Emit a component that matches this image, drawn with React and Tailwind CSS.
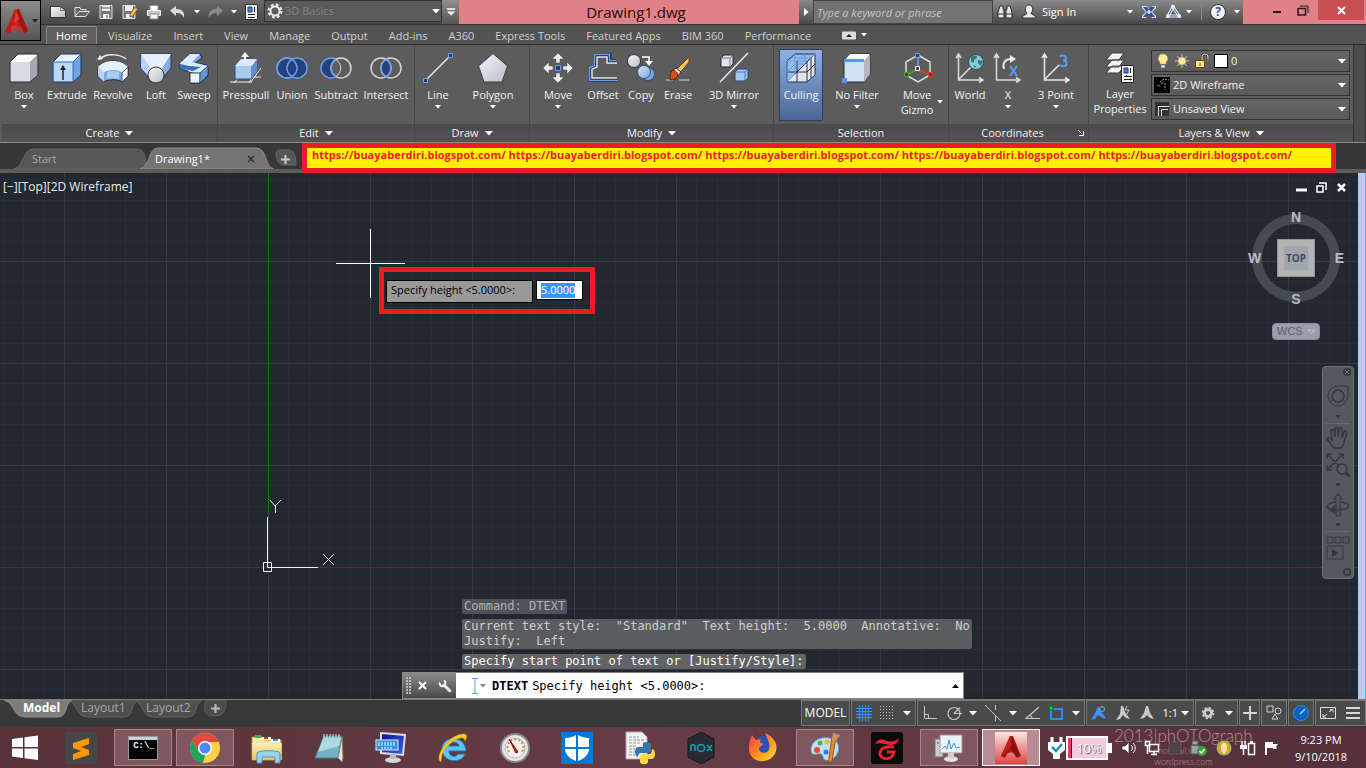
import { useState } from "react";

const Svg = ({ w, h = w, className = "", children }) => (
  <svg
    width={w}
    height={h}
    viewBox={`0 0 ${w} ${h}`}
    fill="none"
    aria-hidden="true"
    className={`shrink-0 ${className}`}
  >
    {children}
  </svg>
);

const Caret = ({ className = "text-white" }) => (
  <Svg w={6} h={4} className={className}>
    <path d="M0 0h6L3 3.5z" fill="currentColor" />
  </Svg>
);

const BigCaret = ({ className = "text-white" }) => (
  <Svg w={8} h={5} className={className}>
    <path d="M0 0h8L4 4.5z" fill="currentColor" />
  </Svg>
);

// Degradados compartidos por los iconos
const Gradients = () => (
  <svg width="0" height="0" className="absolute" aria-hidden="true">
    <defs>
      <linearGradient id="gWhite" x1="0" y1="0" x2="1" y2="1">
        <stop offset="0" stopColor="#f6f7fa" />
        <stop offset="1" stopColor="#b9bcc8" />
      </linearGradient>
      <linearGradient id="gBlue" x1="0" y1="0" x2="1" y2="1">
        <stop offset="0" stopColor="#d6e8fb" />
        <stop offset="1" stopColor="#7ea8dd" />
      </linearGradient>
      <linearGradient id="gRed" x1="0" y1="0" x2="1" y2="1">
        <stop offset="0" stopColor="#f0413c" />
        <stop offset="1" stopColor="#8c1010" />
      </linearGradient>
      <linearGradient id="gAcad" x1="0" y1="0" x2="0" y2="1">
        <stop offset="0" stopColor="#fbe6e4" />
        <stop offset="1" stopColor="#e04444" />
      </linearGradient>
      <linearGradient id="gFolder" x1="0" y1="0" x2="0" y2="1">
        <stop offset="0" stopColor="#fdf3c0" />
        <stop offset="1" stopColor="#e5c35c" />
      </linearGradient>
      <linearGradient id="gFox" x1="0" y1="0" x2="1" y2="1">
        <stop offset="0" stopColor="#ff3b52" />
        <stop offset="0.5" stopColor="#ff8a1c" />
        <stop offset="1" stopColor="#ffe23a" />
      </linearGradient>
      <linearGradient id="gScreen" x1="0" y1="0" x2="1" y2="1">
        <stop offset="0" stopColor="#0a1590" />
        <stop offset="1" stopColor="#3e62ea" />
      </linearGradient>
    </defs>
  </svg>
);

/* ---------- Iconos de la cinta ---------- */

const Cube = ({ blue }) => (
  <>
    <path d="M2 10 10 2h20v21l-8 7H2z" fill={blue ? "#b9d8f6" : "#d9dbe2"} />
    <path d="M2 10 10 2h20l-8 8z" fill={blue ? "#e8f3fd" : "#fafafc"} />
    <path d="M22 10l8-8v21l-8 7z" fill={blue ? "#6fa2e0" : "#a5a8b4"} />
    <path d="M2 10 10 2h20v21l-8 7H2z" stroke={blue ? "#16365f" : "#2c2c30"} />
  </>
);

const icons = {
  box: (
    <Svg w={32}>
      <Cube />
    </Svg>
  ),
  extrude: (
    <Svg w={32}>
      <Cube blue />
      <path d="M2 10h20v20M22 10l8-8M2 10v20" stroke="#2f6cc0" />
      <path d="M12 28V16" stroke="#222" strokeWidth="1.500" />
      <path d="M9 18l3-5 3 5z" fill="#222" />
    </Svg>
  ),
  revolve: (
    <Svg w={32}>
      <path d="M3 7c6-6 20-5 26 0" stroke="#eee" strokeWidth="1.500" />
      <path d="M0 8l3-5 3 4z" fill="#eee" />
      <path d="M1 15c7-8 23-8 30 0v9l-6 6c-2-3-16-3-18 0l-6-6z" fill="#7fa9dd" stroke="#1a3352" />
      <path d="M1 15c7-8 23-8 30 0l-6 6c-2-4-16-4-18 0z" fill="#e3effb" />
      <path d="M7 21l-6-6v9l6 6z" fill="#b8d2f1" />
      <path d="M25 21l6-6v9l-6 6z" fill="#f4f6fa" stroke="#222" strokeWidth="0.7" />
      <path d="M10 20c4-2 8-2 12 0v7c-4-1-8-1-12 0z" fill="#a9cbf2" />
    </Svg>
  ),
  loft: (
    <Svg w={32}>
      <path d="M1 2h30v14l-8 10H9L1 16z" fill="#86ace0" stroke="#1c3a66" />
      <path d="M1 2h30L21 18H11z" fill="#e4f0fc" />
      <path d="M1 2l10 15-2 8-8-9z" fill="#b8d5f4" />
      <circle cx="16" cy="23" r="8" fill="url(#gWhite)" stroke="#333" />
    </Svg>
  ),
  sweep: (
    <Svg w={32}>
      <path d="M2 11 12 2h10l2 4-7 5 11 2 2 3v8l-8 7h-9V20L2 17z" fill="#7ba6dd" stroke="#14335e" />
      <path d="M2 11 12 2h10l-8 8 16 4-8 7-10-1L2 13z" fill="#dcebfb" />
      <path d="M2 12l9 2 12 1-8 4-13-3z" fill="#346fb8" />
      <path d="M12 21h10v10H12z" fill="#f2f3f6" stroke="#222" strokeWidth="0.8" />
      <path d="M22 21l8-7v9l-8 8z" fill="#6897d4" stroke="#14335e" strokeWidth="0.7" />
    </Svg>
  ),
  presspull: (
    <Svg w={32}>
      <path d="M0 30h22M4 31l6-7M21 30 31 16M24 25h7M19 31l3-6" stroke="#eee" />
      <path d="M5 14l6-7h16l-5 7v13H5z" fill="#a9caf0" stroke="#2d5285" />
      <path d="M22 14l5-7v12l-5 8z" fill="#5c8dce" />
      <path d="M5 14l6-7h16l-5 7z" fill="#dbeafb" />
      <path d="M15 10V3" stroke="#fff" strokeWidth="2" />
      <path d="M11 5l4-5 4 5z" fill="#fff" />
    </Svg>
  ),
  union: (
    <Svg w={32}>
      <circle cx="11" cy="16" r="10" fill="#25407a" stroke="#6a9fec" strokeWidth="1.5" />
      <circle cx="21" cy="16" r="10" fill="#25407a" stroke="#6a9fec" strokeWidth="1.5" />
      <circle cx="11" cy="16" r="10" stroke="#6a9fec" strokeWidth="1.5" />
    </Svg>
  ),
  subtract: (
    <Svg w={32}>
      <circle cx="11" cy="16" r="10" fill="#25407a" stroke="#6a9fec" strokeWidth="1.5" />
      <circle cx="21" cy="16" r="10" fill="#5c5c5c" stroke="#d5d5d5" strokeWidth="1.5" />
      <path d="M16 7.500a10 10 0 0 0 0 17" stroke="#6a9fec" strokeWidth="1.5" />
      <path d="M16 7.500a10 10 0 0 1 0 17" stroke="#d5d5d5" />
    </Svg>
  ),
  intersect: (
    <Svg w={32}>
      <circle cx="11" cy="16" r="10" stroke="#d5d5d5" strokeWidth="1.5" />
      <circle cx="21" cy="16" r="10" stroke="#d5d5d5" strokeWidth="1.5" />
      <path d="M16 7.500a10 10 0 0 1 0 17a10 10 0 0 1 0-17z" fill="#25407a" stroke="#6a9fec" strokeWidth="1.5" />
    </Svg>
  ),
  line: (
    <Svg w={32}>
      <path d="M4 28 28 4" stroke="#e8e8e8" strokeWidth="1.5" />
      <path d="M1.500 26.500h4v4h-4zM26.500 1.500h4v4h-4z" fill="#1d3d6e" stroke="#6ba4f5" />
    </Svg>
  ),
  polygon: (
    <Svg w={32}>
      <path d="M16 1.500 30.500 14 25 30H7L1.500 14z" fill="url(#gWhite)" stroke="#3b3b3f" />
    </Svg>
  ),
  move: (
    <Svg w={32}>
      <path
        d="M16 1l6 6h-4v4h-4V7h-4zM16 31l6-6h-4v-4h-4v4h-4zM1 16l6-6v4h4v4H7v4zM31 16l-6-6v4h-4v4h4v4z"
        fill="#ececee"
        stroke="#444"
        strokeWidth="0.5"
      />
      <path d="M13.500 13.500h5v5h-5z" fill="#1d3d6e" stroke="#6ba4f5" />
    </Svg>
  ),
  offset: (
    <Svg w={32}>
      <path d="M30 28H3.500V16l5-2V3.500h14V9h7" stroke="#16233a" strokeWidth="4" />
      <path d="M30 28.500H2.500V15.500l5-2V2.500h15v6h7" stroke="#6fa2ee" strokeWidth="1.500" />
      <path d="M30 26H5V17l5-2V5h10v6h10" stroke="#e8e8e8" strokeWidth="1.500" />
    </Svg>
  ),
  copy: (
    <Svg w={32}>
      <circle cx="9" cy="9" r="6.500" fill="url(#gWhite)" stroke="#333" />
      <path d="M17 5h7v6" stroke="#fff" strokeWidth="1.500" />
      <path d="M20 9h8l-4 5z" fill="#fff" />
      <circle cx="23" cy="22" r="6.500" fill="#7ea8dd" stroke="#2c4d80" />
      <circle cx="19" cy="20" r="6.500" fill="url(#gBlue)" stroke="#2c4d80" />
    </Svg>
  ),
  erase: (
    <Svg w={32}>
      <path d="M4 28h7M17 28h10" stroke="#9a9a9a" strokeWidth="2" />
      <path d="M13 19 27 5v5L17 22z" fill="#f6c562" stroke="#6b4310" />
      <path d="M11 18l3-2 5 4-3 4z" fill="#e8e8ee" stroke="#333" />
      <path d="M11 18c2 0 5 3 5 6-2 3-5 4-8 4 0-4 0-8 3-10z" fill="#d34f16" stroke="#5a1e06" />
    </Svg>
  ),
  mirror: (
    <Svg w={32}>
      <path d="M2 30 30 1" stroke="#e8e8e8" strokeWidth="1.500" />
      <path d="M3 6l3-3h9v9l-3 3H3z" fill="#e3e4ea" stroke="#26262a" />
      <path d="M3 6h9v9M12 6l3-3" stroke="#77777d" />
      <path d="M17 20l3-3h10v9l-3 3H17z" fill="#a6c8f1" stroke="#26436f" />
      <path d="M17 20h10v9M27 20l3-3" stroke="#4679bf" />
    </Svg>
  ),
  culling: (
    <Svg w={32}>
      <path d="M2 9 10 2h20v21l-8 7H2z" fill="#9dbbe4" />
      <path d="M2 30 22 10v20zM22 10l8-8v21l-8 7z" fill="#e3e4ea" />
      <path d="M2 9 10 2h20v21l-8 7H2zM12 9v21M2 20h20M22 9v21M22 20l8-8M26 6v20M2 30 30 2" stroke="#20304f" />
      <path d="M2 9h20l8-7M2 9v21M10 2v20M12 9l8-7M6 6h20M20 2v8M2 20l8-8h10M10 22l-8 8" stroke="#5f9dfa" />
    </Svg>
  ),
  filter: (
    <Svg w={32}>
      <path d="M3 9 9 2h20v20l-6 8H3z" fill="#cfe2f6" stroke="#2c2c30" />
      <path d="M3 9 9 2h20l-6 7z" fill="#f7f8fa" />
      <path d="M23 9l6-7v20l-6 8z" fill="#b4b6c0" />
      <path d="M3 7h20v3H3zM1 26h5v5H1z" fill="#5795f6" />
    </Svg>
  ),
  gizmo: (
    <Svg w={32}>
      <path d="M16 3l12 7v13l-12 7L4 23V10z" stroke="#dedede" strokeWidth="1.500" />
      <path d="M16 16V5" stroke="#68a0f8" strokeWidth="1.500" />
      <path d="M16 17 6 22" stroke="#4ca81c" strokeWidth="1.500" />
      <path d="M16 17l10 5" stroke="#d94320" strokeWidth="1.500" />
      <path d="M13.500 1.500h4v4h-4z" fill="#444" stroke="#68a0f8" />
      <path d="M2.500 20.500h4v4h-4z" fill="#444" stroke="#4ca81c" />
      <path d="M26.500 20.500h4v4h-4z" fill="#444" stroke="#d94320" />
      <path d="M13.500 14.500h4v4h-4z" fill="#444" stroke="#fff" />
    </Svg>
  ),
  world: (
    <Svg w={32}>
      <path d="M4.500 3v25H28M2 6l2.500-4L7 6M25 25.500l4 2.500-4 2.500M5 27l12-12" stroke="#dcdcdc" strokeWidth="1.500" />
      <circle cx="22" cy="10" r="7.500" fill="#8cc6e4" stroke="#274d63" />
      <path d="M17 6c2-3 6-3 6-1s-3 2-3 4-2 2-3 0zM24 8l5 1-2 5-3-3zM19 13l3 1-1 2z" fill="#2e7f5c" />
    </Svg>
  ),
  ucsX: (
    <Svg w={32}>
      <path d="M4.500 3v25H27M2 6l2.500-4L7 6M24 25.500l4 2.500-4 2.500" stroke="#dcdcdc" strokeWidth="1.500" />
      <path d="M12 17c-2-7 2-10 7-10" stroke="#e8e8e8" strokeWidth="2" />
      <path d="M18 3l6 4-6 4z" fill="#e8e8e8" />
      <path d="M18 14l7 10M25 14l-7 10" stroke="#5b9bff" strokeWidth="2" />
    </Svg>
  ),
  point3: (
    <Svg w={32}>
      <path d="M4.500 3v25H28M2 6l2.500-4L7 6M25 25.500l4 2.500-4 2.500M5 27l14-14" stroke="#e8e8e8" strokeWidth="1.500" />
      <path d="M20 5c1-2 6-2 6 1 0 2-2 2.500-3 2.500 2 0 3.500 1 3.500 3 0 3-5 3.500-7 1" stroke="#5b9bff" strokeWidth="2" />
    </Svg>
  ),
  layers: (
    <Svg w={32}>
      <path d="M8 15h12l-5 7H2zM8 9h12l-5 7H2zM8 2h12l-5 7H2z" fill="#f4f4f6" stroke="#3c3c40" />
      <path d="M17.500 14.500h12v17h-12z" fill="#f4f4f6" stroke="#222" />
      <path d="M20 17h4v5h-4z" fill="#4c84d8" stroke="#1d3d6e" />
      <path d="M26.500 17v5M20 25.500h8M20 28.500h8M22.500 24v2M26.500 27.500v2" stroke="#222" />
    </Svg>
  ),
};

/* ---------- Cinta ---------- */

const panels = [
  {
    title: "Create",
    size: "w-[216px]",
    pad: "pl-[2px]",
    caret: true,
    tools: [
      { label: "Box", icon: "box", w: "w-10", caret: true },
      { label: "Extrude", icon: "extrude", w: "w-[46px]" },
      { label: "Revolve", icon: "revolve", w: "w-[46px]" },
      { label: "Loft", icon: "loft", w: "w-10" },
      { label: "Sweep", icon: "sweep", w: "w-9" },
    ],
  },
  {
    title: "Edit",
    size: "w-[197px]",
    pad: "pl-[3px]",
    caret: true,
    tools: [
      { label: "Presspull", icon: "presspull", w: "w-[50px]" },
      { label: "Union", icon: "union", w: "w-[42px]" },
      { label: "Subtract", icon: "subtract", w: "w-[46px]" },
      { label: "Intersect", icon: "intersect", w: "w-[54px]" },
    ],
  },
  {
    title: "Draw",
    size: "w-[115px]",
    pad: "pl-px",
    caret: true,
    tools: [
      { label: "Line", icon: "line", w: "w-11", caret: true },
      { label: "Polygon", icon: "polygon", w: "w-[66px]", caret: true },
    ],
  },
  {
    title: "Modify",
    size: "w-[244px]",
    pad: "pl-[6px]",
    caret: true,
    tools: [
      { label: "Move", icon: "move", w: "w-11", caret: true },
      { label: "Offset", icon: "offset", w: "w-[46px]" },
      { label: "Copy", icon: "copy", w: "w-[30px]" },
      { label: "Erase", icon: "erase", w: "w-11" },
      { label: "3D Mirror", icon: "mirror", w: "w-[68px]", caret: true },
    ],
  },
  {
    title: "Selection",
    size: "w-[175px]",
    pad: "pl-[5px]",
    tools: [
      { label: "Culling", icon: "culling", w: "w-11", active: true },
      { label: "No Filter", icon: "filter", w: "w-[68px]", caret: true },
      { label: "Move Gizmo", icon: "gizmo", w: "w-[54px]", side: true },
    ],
  },
  {
    title: "Coordinates",
    size: "w-[140px]",
    pad: "",
    launcher: true,
    tools: [
      { label: "World", icon: "world", w: "w-[42px]" },
      { label: "X", icon: "ucsX", w: "w-[34px]", caret: true },
      { label: "3 Point", icon: "point3", w: "w-[62px]", caret: true },
    ],
  },
];

const Tool = ({ tool }) => (
  <button
    className={`flex h-[72px] flex-col items-center whitespace-nowrap pt-[2px] ${tool.w} ${
      tool.active ? "border border-[#2b3f66] bg-linear-to-b from-[#8fb1e2] to-[#4b6796]" : "border border-transparent"
    }`}
  >
    {icons[tool.icon]}
    {tool.side ? (
      <span className="mt-[3px] flex items-center gap-1 pl-2 leading-[15px]">
        <span className="text-center">
          Move
          <br />
          Gizmo
        </span>
        <Caret />
      </span>
    ) : (
      <span className="mt-[3px] leading-[15px]">{tool.label}</span>
    )}
    {tool.caret && <Caret className="mt-[3px] text-white" />}
  </button>
);

const PanelTitle = ({ title, caret, launcher }) => (
  <div className="flex h-[18px] items-center justify-center gap-[6px] bg-linear-to-b from-[#4a4a4a] to-[#535353]">
    <span className={launcher ? "ml-auto pl-1" : ""}>{title}</span>
    {caret && <BigCaret />}
    {launcher && (
      <button aria-label="UCS settings" className="ml-auto pr-1">
        <Svg w={6}>
          <path d="M0 0l4 4M5.500 1v4.500H1" stroke="#fff" />
        </Svg>
      </button>
    )}
  </div>
);

const RibbonSelect = ({ label, options, children }) => (
  <div className="flex h-[22px] items-center border border-[#333] bg-linear-to-b from-[#666] to-[#5a5a5a] pr-[3px]">
    {children}
    <select aria-label={label} className="min-w-0 flex-1 appearance-none bg-transparent pl-[3px] outline-none">
      {options.map((o) => (
        <option key={o}>{o}</option>
      ))}
    </select>
    <BigCaret />
  </div>
);

const Ribbon = () => (
  <section className="flex h-[99px] border-y border-[#2a2a2a] border-b-[#8a8a8a] bg-[#5c5c5c] pl-[2px] text-[11px] text-[#f2f2f2]">
    {panels.map((p) => (
      <div key={p.title} className={`flex shrink-0 flex-col border-r border-[#454545] ${p.size}`}>
        <div className={`flex flex-1 items-start pt-1 ${p.pad}`}>
          {p.tools.map((t) => (
            <Tool key={t.label} tool={t} />
          ))}
        </div>
        <PanelTitle title={p.title} caret={p.caret} launcher={p.launcher} />
      </div>
    ))}
    <div className="flex min-w-0 flex-1 flex-col">
      <div className="flex flex-1 gap-1 pt-[5px] pl-1 pr-[3px]">
        <button className="flex w-[54px] flex-col items-center pt-px leading-[15px]">
          {icons.layers}
          <span className="mt-[3px]">
            Layer
            <br />
            Properties
          </span>
        </button>
        <div className="flex min-w-0 flex-1 flex-col gap-[2px]">
          <RibbonSelect label="Layer" options={["0"]}>
            <div className="flex items-center gap-1 pl-1">
              <Svg w={14} h={16}>
                <path d="M7 1a4.500 4.500 0 0 1 3 8v2H4V9a4.500 4.500 0 0 1 3-8z" fill="#fde9a0" stroke="#c9a545" strokeWidth="0.600" />
                <path d="M5 12h4v3H5z" fill="#e8e8ee" stroke="#555" strokeWidth="0.500" />
              </Svg>
              <Svg w={16}>
                <path d="M8 1v14M1 8h14M3 3l10 10M13 3 3 13" stroke="#c8c8c8" />
                <circle cx="8" cy="8" r="4" fill="#fde9a0" stroke="#8a7735" strokeWidth="0.500" />
              </Svg>
              <Svg w={16}>
                <path d="M8 8V4a3 3 0 0 1 6 0v2" stroke="#222" strokeWidth="2.500" />
                <path d="M8 8V4a3 3 0 0 1 6 0v2" stroke="#e8e0b8" strokeWidth="1.200" />
                <path d="M1.500 7.500h9v7h-9z" fill="#fde08a" stroke="#5b4a16" />
                <path d="M6 10v3" stroke="#5b4a16" />
              </Svg>
              <span className="size-[14px] border border-black bg-white" />
            </div>
          </RibbonSelect>
          <RibbonSelect label="Visual style" options={["2D Wireframe"]}>
            <Svg w={16} className="ml-[2px]">
              <path d="M0 0h16v16H0z" fill="#000" />
              <path d="M6 5c2-3 5-3 9-2M8 5v3M11 6v7M3 9c1-2 3-1 3 1" stroke="#999" strokeDasharray="2 1" />
            </Svg>
          </RibbonSelect>
          <RibbonSelect label="View" options={["Unsaved View"]}>
            <Svg w={16} className="ml-[2px]">
              <path d="M1 1h14v14H1z" fill="#333" />
              <path d="M4 5.500h11M4.500 5v10M7 8.500h7M7.500 8v7" stroke="#ddd" />
            </Svg>
          </RibbonSelect>
        </div>
      </div>
      <PanelTitle title="Layers & View" caret />
    </div>
    <div className="w-[13px] shrink-0 border-x border-[#333] bg-[#4c4c4c]" />
  </section>
);

/* ---------- Barra de título ---------- */

const QuickAccess = () => (
  <div className="flex items-center gap-2 pl-[9px]">
    <button aria-label="New">
      <Svg w={16}>
        <path d="M.5 2.500h10l5 4v7H.5z" fill="url(#gWhite)" stroke="#333" />
        <path d="M10.500 2.500v4h5" stroke="#777" />
      </Svg>
    </button>
    <button aria-label="Open">
      <Svg w={16}>
        <path d="M1 12.500V3.500h5l1 2h5v2M1 12.500 5 7.500h10.500l-4 5z" fill="#666" stroke="#e0e0e0" />
      </Svg>
    </button>
    <button aria-label="Save">
      <Svg w={16}>
        <path d="M2 1.500h12v13H2z" fill="#777" stroke="#e0e0e0" />
        <path d="M4 2h8v5H4zM5 10h6v4H5z" fill="#eee" />
        <path d="M4 4h8M9 11v3" stroke="#555" />
      </Svg>
    </button>
    <button aria-label="Save as">
      <Svg w={16}>
        <path d="M1 1.500h12v13H1z" fill="#777" stroke="#e0e0e0" />
        <path d="M3 2h8v5H3zM4 10h6v4H4z" fill="#eee" />
        <path d="M8 10l5-7 3 2-5 7-3 1z" fill="#f3b24a" stroke="#6b4310" strokeWidth="0.700" />
      </Svg>
    </button>
    <button aria-label="Plot">
      <Svg w={16}>
        <path d="M4 1.500h8V7H4z" fill="#fff" stroke="#999" />
        <path d="M1.500 6.500h13v5h-13z" fill="#c4c6cc" stroke="#eee" />
        <path d="M4 10h8v5H4z" fill="#f4f4f4" stroke="#888" />
      </Svg>
    </button>
    <button aria-label="Undo" className="flex items-center gap-2">
      <Svg w={16}>
        <path d="M0 6.500 6 2v3c6 0 9 3 8 9-1-3-3-5-8-5v3z" fill="#dcdcdc" />
      </Svg>
      <Caret />
    </button>
    <button aria-label="Redo" className="flex items-center gap-2">
      <Svg w={15} h={16}>
        <path d="M15 6.500 9 2v3c-6 0-9 3-8 9 1-3 3-5 8-5v3z" fill="#8b8b8b" />
      </Svg>
      <Caret />
    </button>
    <button aria-label="Sheet set manager">
      <Svg w={14} h={16}>
        <path d="M.5 .5h12v15H.5z" fill="#f0f0f2" stroke="#333" />
        <path d="M3 3h4v5H3z" fill="#4c84d8" stroke="#1d3d6e" />
        <path d="M9.500 3v5M3 10.500h7M3 13.500h7" stroke="#222" />
      </Svg>
    </button>
  </div>
);

const TitleBar = () => (
  <div className="flex h-6 min-w-0 bg-[#df8187]">
    <div className="flex w-[418px] shrink-0 bg-linear-to-b from-[#6a6a6a] to-[#474747]">
      <QuickAccess />
      <div className="ml-[5px] flex h-[22px] min-w-0 flex-1 items-center gap-[2px] border border-[#333] bg-[#5a5a5a] pl-[2px] pr-px">
        <Svg w={16}>
          <circle cx="8" cy="8" r="6" stroke="#e8e8e8" strokeWidth="3" strokeDasharray="2.600 2.112" />
          <circle cx="8" cy="8" r="4.500" stroke="#e8e8e8" strokeWidth="2" />
        </Svg>
        <select aria-label="Workspace" className="min-w-0 flex-1 appearance-none bg-transparent text-[11px] text-[#858585] outline-none">
          <option>3D Basics</option>
        </select>
        <BigCaret />
      </div>
      <button aria-label="Customize toolbar" className="flex w-[17px] items-center justify-center bg-linear-to-b from-[#909090] to-[#555]">
        <Svg w={8} h={8}>
          <path d="M0 1h8" stroke="#fff" strokeWidth="1.500" />
          <path d="M0 3.500h8L4 7.500z" fill="#fff" />
        </Svg>
      </button>
    </div>
    <h1 className="flex-1 pl-[14px] text-center text-[15px] leading-6 text-[#1c0d0e]">Drawing1.dwg</h1>
    <div className="flex w-[444px] shrink-0 items-center bg-linear-to-b from-[#8a8a8a] to-[#4a4a4a]">
      <button aria-label="Collapse search" className="flex w-[14px] justify-center">
        <Svg w={5} h={8}>
          <path d="M0 0l4.500 4L0 8z" fill="#fff" />
        </Svg>
      </button>
      <input
        aria-label="Search"
        placeholder="Type a keyword or phrase"
        className="h-6 w-[180px] border border-[#444] bg-[#737373] px-[3px] text-[11px] italic placeholder:text-[#c4c4c4]"
      />
      <button aria-label="Find" className="ml-1">
        <Svg w={16}>
          <path d="M3 2h3v3l1 2v7H1V8zM10 2h3l2 6v6H9V7l1-2z" fill="#e8e8ea" stroke="#2a2a2a" />
          <path d="M1 10h6M9 10h6M7 6h2" stroke="#333" />
        </Svg>
      </button>
      <button className="ml-2 flex flex-1 items-center text-[11px] text-white">
        <Svg w={16}>
          <path d="M8 1c5 0 4 7 2 8 0 2 5 2 5 5H1c0-3 5-3 5-5C4 8 3 1 8 1z" fill="#ececee" stroke="#333" />
        </Svg>
        <span className="ml-[5px] flex-1 text-left">Sign In</span>
        <Caret />
      </button>
      <button aria-label="Exchange" className="ml-2">
        <Svg w={16}>
          <path d="M1 2h5l3 4 3-4h3v2l-4 4 4 4v2h-4l-3-4-3 4H1v-2l4-4-4-4z" fill="#d5e2f5" />
          <path d="M2 3h4l8 10h-4zM14 3h-4L2 13h4z" fill="#2d4e9a" />
        </Svg>
      </button>
      <button aria-label="A360" className="ml-2 flex items-center gap-1">
        <Svg w={17} h={16}>
          <path d="M8 3l6 9H3z" stroke="#e6e9f2" strokeWidth="3" />
          <path d="M8 3l6 9H3z" stroke="#3e5c9e" />
          <circle cx="8" cy="3" r="2" fill="#e6e9f2" />
          <circle cx="14" cy="12" r="2" fill="#e6e9f2" />
          <circle cx="3" cy="12" r="2" fill="#e6e9f2" />
        </Svg>
        <Caret />
      </button>
      <button aria-label="Help" className="ml-[9px] mr-[3px] flex items-center gap-2 border-l border-[#888] pl-2">
        <span className="flex size-4 items-center justify-center rounded-full border border-[#333] bg-[#f2f2f4] text-[12px] font-bold leading-none text-[#2c55a8]">
          ?
        </span>
        <Caret />
      </button>
    </div>
    <div className="flex w-[123px] shrink-0 items-start pl-[30px] pr-[2px]">
      <button aria-label="Minimize" className="flex h-5 w-6 items-center">
        <Svg w={8} h={8}>
          <path d="M0 6h8" stroke="#1c1c1c" strokeWidth="2" />
        </Svg>
      </button>
      <button aria-label="Restore" className="flex h-5 flex-1 items-center">
        <Svg w={12}>
          <path d="M1 4.500h7.500V11H1z" stroke="#1c1c1c" strokeWidth="1.500" />
          <path d="M3 2h8v7" stroke="#1c1c1c" />
        </Svg>
      </button>
      <button aria-label="Close" className="flex h-5 w-[46px] items-center justify-center bg-[#c74f4f]">
        <Svg w={9}>
          <path d="M1 1l7 7M8 1 1 8" stroke="#fff" strokeWidth="2" />
        </Svg>
      </button>
    </div>
  </div>
);

const menu = ["Home", "Visualize", "Insert", "View", "Manage", "Output", "Add-ins", "A360", "Express Tools", "Featured Apps", "BIM 360", "Performance"];

const MenuTabs = () => {
  const [active, setActive] = useState("Home");
  return (
    <nav className="flex h-5 items-end gap-px border-t border-[#333] bg-[#535353] pl-[5px] text-[11px] text-[#cfcfcf]">
      {menu.map((m) => (
        <button
          key={m}
          onClick={() => setActive(m)}
          className={`h-[18px] px-[9px] leading-[15px] ${
            m === active ? "rounded-t-[2px] border border-b-0 border-[#8c8c8c] bg-[#5f5f5f] text-white" : "border border-b-0 border-transparent"
          }`}
        >
          {m}
        </button>
      ))}
      <button aria-label="Minimize ribbon" className="ml-5 flex h-[18px] items-center gap-[5px]">
        <Svg w={14} h={9}>
          <path d="M1 .5h12a1 1 0 0 1 1 1v6a1 1 0 0 1-1 1H1a1 1 0 0 1-1-1v-6a1 1 0 0 1 1-1z" fill="#dedede" />
          <path d="M4 6h6L7 3z" fill="#222" />
        </Svg>
        <Caret />
      </button>
    </nav>
  );
};

const AppButton = () => (
  <button aria-label="Application menu" className="row-span-2 flex h-[41px] items-center gap-[2px] self-start border border-black bg-linear-to-b from-[#8d8d8d] to-[#555] pl-[3px]">
    <Svg w={26} h={26}>
      <path d="M11 1h4l9 22-4 2-3-1-1-4H9l-2 4-4 1-2-1z" fill="url(#gRed)" />
      <path d="M11 1 1 24l6 1c0-5 3-9 9-12z" fill="#c01d1d" />
      <path d="M13 1l-2 10 5 4 5 9 3-1L15 1z" fill="#a81414" />
      <path d="M12 3l3 8-5 5z" fill="#e03a34" />
      <path d="M7 19c4-3 8-2 11 1l2 5c-3 0-3-4-6-4s-5 0-7 3z" fill="#d92c28" />
    </Svg>
    <Caret className="text-[#222]" />
  </button>
);

/* ---------- Pestañas de archivo ---------- */

const site = "https://buayaberdiri.blogspot.com/";

const FileTabs = () => (
  <div className="flex h-[30px] border-b-4 border-[#5c5c5c] bg-[#373737]">
    <div className="relative isolate flex w-[302px] shrink-0 items-end pl-[18px] text-[11px]">
      <svg width="302" height="24" viewBox="0 0 302 24" className="absolute bottom-0 left-0 -z-10" aria-hidden="true">
        <path d="M14 24c10-2 8-20 20-20h102c8 0 10 6 10 20z" fill="#575757" stroke="#666" />
        <path d="M140 24c10-2 8-21 18-21h98c12 0 8 19 18 21z" fill="#747474" stroke="#8c8c8c" />
        <path d="M284 20c-4 0-8-4-8-12 0-2 2-3 4-3h8c6 0 8 6 8 15z" fill="#565656" stroke="#666" />
      </svg>
      <button className="h-5 w-[126px] pl-[14px] text-left text-[#a8a8a8]">Start</button>
      <button className="flex h-5 w-[120px] items-center justify-between pl-[11px] pr-[9px] text-white">
        Drawing1*
        <Svg w={8}>
          <path d="M1 1l6 6M7 1 1 7" stroke="#333" strokeWidth="1.500" />
        </Svg>
      </button>
      <button aria-label="New drawing" className="flex h-5 flex-1 items-center pl-[17px]">
        <Svg w={9}>
          <path d="M4.500 0v9M0 4.500h9" stroke="#ccc" strokeWidth="2" />
        </Svg>
      </button>
    </div>
    <p className="z-10 mr-[30px] h-[30px] flex-1 overflow-hidden whitespace-pre border-[5px] border-[#ed1c24] bg-[#fff200] pl-[5px] text-[11px] font-bold leading-[13px]">
      {Array.from({ length: 5 }, (_, i) => (
        <a key={i} href={site} className="text-[#ed1c24]">
          {site + " "}
        </a>
      ))}
    </p>
  </div>
);

/* ---------- Área de dibujo ---------- */

const Grid = () => (
  <svg className="absolute inset-0 size-full" fill="none" aria-hidden="true">
    <defs>
      <pattern id="grid" width="102" height="102" x="64" y="88" patternUnits="userSpaceOnUse">
        <path d="M20.500 0v102M41.500 0v102M61.500 0v102M82.500 0v102M0 20.500h102M0 41.500h102M0 61.500h102M0 82.500h102" stroke="#272e39" />
        <path d="M.5 0v102M0 .5h102" stroke="#323949" />
      </pattern>
    </defs>
    <rect width="100%" height="100%" fill="url(#grid)" />
    <path d="M268.500 0v344" stroke="#1f6f24" />
    <path d="M318 394.500h2000" stroke="#5b2a33" />
    {/* icono UCS */}
    <path d="M267.500 390v-46M272 394.500h46M263.500 389.500h8v9h-8z" stroke="#f0f0f0" />
    <path d="M267.500 390v4.500h4M270 327l5 6 6-6M275.500 333v7M323 381l11 11M334 381l-11 11" stroke="#e8e8e8" />
    {/* cursor */}
    <path d="M370.500 56v69M336 90.500h69" stroke="#fff" />
  </svg>
);

const ViewCube = () => (
  <div className="absolute right-[14px] top-[36px] flex w-[96px] flex-col items-center">
    <div className="relative grid h-[98px] w-full place-items-center text-[14px] font-bold text-[#bcbcbc] font-['Liberation_Sans',sans-serif]">
      <span className="absolute size-[88px] rounded-full border-[10px] border-[#454b53]" />
      <span className="absolute top-0 leading-4">N</span>
      <span className="absolute bottom-0 leading-4">S</span>
      <span className="absolute left-0 leading-4">W</span>
      <span className="absolute right-0 leading-4">E</span>
      <button className="z-10 size-[38px] border border-[#8f9690] bg-[#b3b3b3] p-[6px] text-[10px] text-[#454c58] font-['Open_Sans',sans-serif]">
        <span className="flex size-full items-center justify-center bg-[#a0a6ad]">TOP</span>
      </button>
    </div>
    <button className="mt-4 flex h-[17px] w-12 items-center gap-1 rounded-[4px] border border-[#8b8e99] bg-[#9a9daa] pl-1 text-[11px] text-[#5c5f69] font-['Liberation_Sans',sans-serif]">
      WCS
      <Svg w={9} h={6}>
        <path d="M1 1h7L4.500 4.500z" stroke="#c0c3cc" />
      </Svg>
    </button>
  </div>
);

const NavBar = () => (
  <div className="absolute right-[4px] top-[193px] flex h-[213px] w-8 flex-col items-center rounded-[4px] border border-[#6e7175] bg-[#55595e] text-[#34383d]">
    <button aria-label="Close navigation bar" className="mr-[2px] mt-px self-end">
      <Svg w={8}>
        <circle cx="4" cy="4" r="4" fill="currentColor" />
        <path d="M2 2l4 4M6 2 2 6" stroke="#777" />
      </Svg>
    </button>
    <button aria-label="Full navigation wheel" className="mt-[9px]">
      <Svg w={22}>
        <path d="M11 1h10v10a10 10 0 1 1-10-10z" stroke="currentColor" />
        <circle cx="11" cy="11" r="6" stroke="currentColor" strokeWidth="1.500" />
        <path d="M4 16l3-2M18 16l-3-2M6 6l2 2" stroke="currentColor" />
      </Svg>
    </button>
    <Caret className="mt-2" />
    <button aria-label="Pan" className="mt-1 border-t border-[#666a6e] pt-[2px]">
      <Svg w={24}>
        <path
          d="M8 22C5 19 3 16 1 13c0-2 2-2 5 1L5 5c0-2 2-2 3 0l1 6V3c0-2 3-2 3 0v8l1-8c0-2 3-2 3 0v9l2-6c1-2 3-1 3 1l-3 9c0 3-2 5-3 6z"
          stroke="currentColor"
          strokeWidth="1.500"
        />
      </Svg>
    </button>
    <button aria-label="Zoom" className="mt-[3px]">
      <Svg w={24}>
        <path d="M2 2l14 14M16 2 2 16M1 6V1h5M12 1h5v5M1 12v5h5" stroke="currentColor" strokeWidth="1.500" />
        <circle cx="16" cy="16" r="5" fill="#55595e" stroke="currentColor" strokeWidth="1.500" />
        <path d="M20 20l4 4" stroke="currentColor" strokeWidth="2.500" />
      </Svg>
    </button>
    <Caret className="mt-[6px]" />
    <button aria-label="Orbit" className="mt-[6px]">
      <Svg w={24}>
        <path d="M12 1l4 5h-2v17h-4V6H8z" stroke="currentColor" strokeWidth="1.200" />
        <path d="M9 9c-11 2-10 8 2 8 14 0 15-7 4-8" stroke="currentColor" strokeWidth="1.500" />
        <path d="M9 12l-6 5 6 4z" fill="currentColor" />
      </Svg>
    </button>
    <Caret className="mt-[6px]" />
    <button aria-label="Show motion" className="mt-1 border-t border-[#666a6e] pt-1">
      <Svg w={24}>
        <path d="M1 1h6v6H1zM9 1h6v6H9zM17 1h6v6h-6zM1 10h16v13H1z" stroke="currentColor" />
        <path d="M6 13l7 4-7 4z" fill="currentColor" />
      </Svg>
    </button>
    <button aria-label="Navigation bar options" className="mb-[2px] mr-[2px] mt-auto self-end">
      <Svg w={8}>
        <circle cx="4" cy="4" r="4" fill="currentColor" />
        <path d="M2 3h4M2 5h4" stroke="#777" />
      </Svg>
    </button>
  </div>
);

const CommandLine = () => (
  <div className="absolute bottom-0 left-[402px] w-[562px] font-['DejaVu_Sans_Mono',monospace] text-[12px]">
    <div className="flex flex-col items-start gap-[5px] whitespace-pre pb-[3px] pl-[60px] leading-[15px]">
      <p className="rounded-[2px] bg-[#4f5257] px-[2px] text-[#b0b0b0]">Command: DTEXT</p>
      <p className="rounded-[2px] bg-[#5a5c60] px-[2px] text-[#cfcfcf]">
        {'Current text style:  "Standard"  Text height:  5.0000  Annotative:  No\nJustify:  Left'}
      </p>
      <p className="rounded-[2px] bg-[#616365] px-[2px] text-white">Specify start point of text or [Justify/Style]:</p>
    </div>
    <div className="flex h-[27px] border border-[#888] bg-white">
      <div className="flex w-[53px] items-center gap-[7px] bg-linear-to-b from-[#8a8a8a] to-[#4a4a4a] pl-[3px]">
        <Svg w={5} h={18}>
          <path d="M1 0v18M4 0v18" stroke="#bbb" strokeWidth="2" strokeDasharray="2 1" />
        </Svg>
        <button aria-label="Close command line">
          <Svg w={9}>
            <path d="M1 1l7 7M8 1 1 8" stroke="#fff" strokeWidth="2" />
          </Svg>
        </button>
        <button aria-label="Customize" className="pl-1">
          <Svg w={14}>
            <path d="M6 1c-1 1 0 3 1 3L4 6C2 5 3 3 1 3c-1 4 2 6 5 5l5 5c2 1 3-1 2-2L8 6c1-3 0-5-2-5z" fill="#f0f0f0" />
          </Svg>
        </button>
      </div>
      <label className="flex flex-1 items-center pl-4 pr-1 text-black">
        <Svg w={6} h={16}>
          <path d="M0 .5h6M3 .5v15M0 15.500h6" stroke="#5b9bee" />
        </Svg>
        <Caret className="mx-[2px] text-[#888]" />
        <span className="ml-1 whitespace-nowrap">
          <b className="pr-1">DTEXT</b>
          Specify height &lt;5.0000&gt;:
        </span>
        <input className="min-w-0 flex-1 outline-none" />
        <Svg w={7} h={4}>
          <path d="M0 4h7L3.500 0z" fill="#111" />
        </Svg>
      </label>
    </div>
  </div>
);

const Canvas = () => (
  <main className="flex h-[526px]">
    <div className="relative flex-1 overflow-hidden bg-[#212830]">
      <Grid />
      <p className="relative pl-[3px] pt-[6px] text-[12px] leading-4 text-[#ececec]">[−][Top][2D Wireframe]</p>
      <div className="absolute right-[11px] top-[9px] flex items-center gap-[9px]">
        <button aria-label="Minimize drawing">
          <Svg w={11}>
            <path d="M0 8h11" stroke="#fff" strokeWidth="3" />
          </Svg>
        </button>
        <button aria-label="Restore drawing">
          <Svg w={11}>
            <path d="M1 4h6v6H1zM3 1h7v7" stroke="#fff" strokeWidth="1.500" />
          </Svg>
        </button>
        <button aria-label="Close drawing">
          <Svg w={11}>
            <path d="M2 2l7 7M9 2 2 9" stroke="#fff" strokeWidth="2.500" />
          </Svg>
        </button>
      </div>
      <div className="absolute left-[379px] top-[94px] flex h-[47px] w-[216px] items-start gap-[3px] border-[5px] border-[#ed1c24] pl-[2px] pt-2 text-[11px]">
        <label htmlFor="height" className="h-[23px] w-[147px] whitespace-nowrap border border-black bg-[#999] pl-1 leading-[17px] text-black">
          Specify height &lt;5.0000&gt;:
        </label>
        <div className="flex h-5 w-[47px] items-center border border-black bg-white pl-1">
          <input id="height" defaultValue="5.0000" className="h-[15px] w-[34px] bg-[#3399ff] text-white outline-none" />
        </div>
      </div>
      <ViewCube />
      <NavBar />
      <CommandLine />
    </div>
    <div className="w-2 border-r border-[#35c8f0] bg-[#b4cde8]" />
  </main>
);

/* ---------- Barra de estado ---------- */

const StatusGroup = ({ className, children }) => (
  <div className={`flex shrink-0 items-center justify-around border border-[#777] bg-[#4a4a4a] ${className}`}>{children}</div>
);

const StatusIcon = ({ label, children }) => (
  <button aria-label={label}>
    <Svg w={16}>{children}</Svg>
  </button>
);

const StatusBar = () => (
  <footer className="flex h-7 border-t border-[#7a7a7a] bg-[#383838] text-[12px]">
    <div className="relative isolate flex flex-1 items-start pl-[23px] leading-4 text-[#a9a9a9]">
      <svg width="240" height="18" viewBox="0 0 240 18" className="absolute left-0 top-0 -z-10" aria-hidden="true">
        <path d="M206 0h20c0 10-2 16-12 16-8 0-12-4-8-16z" fill="#4c4c4c" stroke="#5c5c5c" />
        <path d="M134 0h68c-8 4-4 17-14 17h-34c-12 0-10-13-20-17z" fill="#4f4f4f" stroke="#636363" />
        <path d="M68 0h70c-8 4-4 17-14 17H88C76 17 78 4 68 0z" fill="#4f4f4f" stroke="#636363" />
        <path d="M4 0h68c-8 4-4 17-14 17H26C12 17 16 4 4 0z" fill="#7d7d7d" stroke="#909090" />
      </svg>
      <button className="w-[58px] text-left font-bold text-white">Model</button>
      <button className="w-[65px] text-left">Layout1</button>
      <button className="w-[65px] text-left">Layout2</button>
      <button aria-label="New layout" className="h-4">
        <Svg w={9}>
          <path d="M4.500 0v9M0 4.500h9" stroke="#bbb" strokeWidth="2" />
        </Svg>
      </button>
    </div>
    <div className="flex h-[26px] gap-px text-white">
      <StatusGroup className="w-[49px]">
        <button>MODEL</button>
      </StatusGroup>
      <StatusGroup className="w-[65px]">
        <StatusIcon label="Grid">
          <path d="M3.500 0v16M6.500 0v16M9.500 0v16M12.500 0v16M0 3.500h16M0 6.500h16M0 9.500h16M0 12.500h16" stroke="#3490ff" />
        </StatusIcon>
        <StatusIcon label="Snap">
          <path d="M1 1.500h14M1 4.500h14M1 7.500h14M1 10.500h14M1 13.500h14" stroke="#c4c4c4" strokeDasharray="1 2" />
        </StatusIcon>
        <BigCaret />
      </StatusGroup>
      <StatusGroup className="w-[168px]">
        <StatusIcon label="Ortho">
          <path d="M2.500 1v12.500H15M2.500 9.500h4v4" stroke="#c4c4c4" />
        </StatusIcon>
        <StatusIcon label="Polar tracking">
          <circle cx="8" cy="8.500" r="6" stroke="#c4c4c4" strokeWidth="1.200" />
          <path d="M8 8.500h8M8 8.500l6-6" stroke="#c4c4c4" strokeWidth="1.200" />
        </StatusIcon>
        <BigCaret />
        <StatusIcon label="Isometric drafting">
          <path d="M0 0l16 16M10.500 0v5M10.500 10v6" stroke="#c4c4c4" />
        </StatusIcon>
        <BigCaret />
        <StatusIcon label="Object snap tracking">
          <path d="M14 2 1 13.500h14M5 10l3 4" stroke="#c4c4c4" strokeWidth="1.200" />
        </StatusIcon>
        <StatusIcon label="Object snap">
          <path d="M3 4h11v10H3z" stroke="#2f8af5" strokeWidth="2" />
          <path d="M1 1h4v4H1z" fill="#12d212" stroke="#064" />
        </StatusIcon>
        <BigCaret />
      </StatusGroup>
      <StatusGroup className="w-[108px]">
        <StatusIcon label="Annotation visibility">
          <path d="M7 1l2 5 4 4 2 4-5-2-3-2-3 4-4 1 3-5 2-4z" fill="#3b93fb" />
          <circle cx="11" cy="4" r="2.500" stroke="#7bb8ff" />
        </StatusIcon>
        <StatusIcon label="Auto scale">
          <path d="M6 1h2l2 6 5 7-4-1-3-3-3 4-4 1 4-6z" fill="#c8c8c8" />
          <path d="M12 1l-2 4h4l-2 4" stroke="#c8c8c8" />
        </StatusIcon>
        <StatusIcon label="Annotation scale">
          <path d="M7 1h2l2 7 4 6-4-1-3-3-3 3-4 1 4-6z" fill="#c8c8c8" />
        </StatusIcon>
        <button className="flex items-center gap-[3px] text-[11px]">
          1:1 <BigCaret />
        </button>
      </StatusGroup>
      <StatusGroup className="w-[43px]">
        <StatusIcon label="Workspace switching">
          <circle cx="8" cy="8" r="3.500" stroke="#c8c8c8" strokeWidth="3" />
          <circle cx="8" cy="8" r="5" stroke="#c8c8c8" strokeWidth="2.500" strokeDasharray="2 1.927" />
        </StatusIcon>
        <BigCaret />
      </StatusGroup>
      <StatusGroup className="w-[21px]">
        <StatusIcon label="Annotation monitor">
          <path d="M8 1v14M1 8h14" stroke="#d4d4d4" strokeWidth="2" />
        </StatusIcon>
      </StatusGroup>
      <StatusGroup className="w-[26px]">
        <StatusIcon label="Isolate objects">
          <path d="M1 1h6v6H1zM6 14l3-5 3 5z" stroke="#d4d4d4" />
          <circle cx="12" cy="6" r="3" stroke="#d4d4d4" />
        </StatusIcon>
      </StatusGroup>
      <StatusGroup className="w-[26px]">
        <StatusIcon label="Hardware acceleration">
          <circle cx="8" cy="8" r="7.500" fill="#0c63bd" stroke="#2b8cf0" />
          <path d="M7 9l5-5" stroke="#9cccff" strokeWidth="1.500" />
        </StatusIcon>
      </StatusGroup>
      <StatusGroup className="w-[51px]">
        <StatusIcon label="Clean screen">
          <path d="M.5 2.500h15v11H.5zM9 7l4-3M10 4.500h3v3M7 9l-4 3M3 9v3h3" stroke="#e0e0e0" />
        </StatusIcon>
        <StatusIcon label="Customization">
          <path d="M1 3h14M1 8h14M1 13h14" stroke="#d8d8d8" strokeWidth="2" />
        </StatusIcon>
      </StatusGroup>
    </div>
  </footer>
);

/* ---------- Barra de tareas ---------- */

const taskApps = [
  {
    name: "Sublime Text",
    icon: (
      <Svg w={32}>
        <rect width="32" height="32" rx="2" fill="#474747" />
        <path d="M8 11l16-5v6l-8 3 8 3v5L8 28v-6l8-3-8-3z" fill="#ff9800" />
      </Svg>
    ),
  },
  {
    name: "Command Prompt",
    open: true,
    icon: (
      <span className="flex h-6 w-[30px] flex-col border border-[#999] bg-black">
        <span className="h-[3px] bg-[#c8d0dc]" />
        <span className="pl-[2px] font-['Liberation_Mono',monospace] text-[9px] font-bold leading-3 text-white">C:\_</span>
      </span>
    ),
  },
  {
    name: "Chrome",
    open: true,
    icon: (
      <Svg w={32}>
        <circle cx="16" cy="16" r="15" fill="#fcd04b" />
        <path d="M3 8.500A15 15 0 0 1 29 8.500L29.500 10H16L9.500 19z" fill="#de4b3e" />
        <path d="M3 8.500 10 20l6 3-2 8A15 15 0 0 1 3 8.500z" fill="#1ea362" />
        <circle cx="16" cy="16" r="7" fill="#fff" />
        <circle cx="16" cy="16" r="5.500" fill="#4a8af5" />
      </Svg>
    ),
  },
  {
    name: "File Explorer",
    icon: (
      <Svg w={32}>
        <path d="M1 5h10l2 3h17v20H1z" fill="url(#gFolder)" stroke="#b8923a" />
        <path d="M4 3h6v3H4z" fill="#39b54a" />
        <path d="M11 5h9v3h-9z" fill="#fff" />
        <path d="M13 5h4v2h-4z" fill="#d4372a" />
        <path d="M20 7h9v3h-9z" fill="#fff" />
        <path d="M22 7h5v2h-5z" fill="#3b8fd8" />
        <path d="M1 11h30v17H1z" fill="url(#gFolder)" opacity=".8" />
        <path d="M6 31V21c0-3 23-3 23 0v10h-5v-6H11v6z" fill="#9bd3ee" stroke="#4b97c2" />
      </Svg>
    ),
  },
  {
    name: "Notepad",
    icon: (
      <Svg w={32}>
        <path d="M11 4h18l-4 22H2z" fill="#6fb3c4" stroke="#477e8c" />
        <path d="M29 5l-4 21 4 4 1-4z" fill="#e9e3d4" stroke="#8b8370" />
        <path d="M10 6h18l-2 8L5 20z" fill="#c9e8ef" opacity=".7" />
        <path d="M11 2v4M14 2v4M17 2v4M20 2v4M23 2v4M26 2v4" stroke="#ddd" />
      </Svg>
    ),
  },
  {
    name: "On-Screen Keyboard",
    icon: (
      <Svg w={32}>
        <path d="M6 1l24 2-2 20-22-2z" fill="url(#gScreen)" stroke="#d8dbe4" strokeWidth="2" />
        <ellipse cx="18" cy="28" rx="8" ry="3" fill="#d5d8df" />
        <path d="M15 22h6v5h-6z" fill="#b9bdc7" />
        <rect x="1" y="8" width="22" height="10" fill="#2f8fe0" stroke="#dceeff" />
        <path d="M3 11h18M3 13h18M6 16h12" stroke="#fff" strokeDasharray="2 1" />
      </Svg>
    ),
  },
  {
    name: "Internet Explorer",
    icon: (
      <Svg w={32}>
        <path
          d="M28 22c-3 10-22 9-23-4C4 3 28 2 29 19H12c0 6 7 7 9 3zM12 14h10c-1-5-9-5-10 0z"
          fill="#5cc4f3"
          stroke="#2376b5"
          fillRule="evenodd"
        />
        <path d="M4 30C-4 25 13 1 27 2c4 0 3 4 1 7 0-8-19 1-23 14 0 3-1 5-1 7z" fill="#f8cd2c" stroke="#c28c10" strokeWidth="0.500" />
      </Svg>
    ),
  },
  {
    name: "Gauge",
    icon: (
      <Svg w={32}>
        <circle cx="16" cy="16" r="14" fill="#e6e6e8" stroke="#8b8b8f" strokeWidth="2" />
        <circle cx="16" cy="16" r="10" fill="#f5f1ea" stroke="#bbb" />
        <path d="M10 20a8 8 0 1 1 13 0" stroke="#d87f38" strokeWidth="2" strokeDasharray="2 2" />
        <path d="M10 7l7 14 2-1z" fill="#b82020" stroke="#861010" />
      </Svg>
    ),
  },
  {
    name: "Defender",
    icon: (
      <Svg w={32}>
        <path d="M0 0h32v32H0z" fill="#0078d7" />
        <path d="M15 3v12H4V6c4 0 8-1 11-3zM17 3c3 2 7 3 11 3v9H17zM4 17h11v12C9 27 4 22 4 17zM17 17h11c0 5-5 10-11 12z" fill="#fff" />
      </Svg>
    ),
  },
  {
    name: "Python file",
    icon: (
      <Svg w={32} h={34}>
        <path d="M3 1h16l5 5v22H3z" fill="#f1f1f1" stroke="#aaa" />
        <path d="M6 6h10M6 9h15M6 12h12M6 15h8M6 18h6M6 21h6M6 24h6" stroke="#999" strokeDasharray="3 1" />
        <path d="M15 26c-4 0-4-10 0-10h5v-4c0-1 7-1 8 1v6c0 3-2 3-5 3h-5c-2 0-3 2-3 4z" fill="#3874a8" />
        <path d="M29 18c4 0 4 10 0 10h-4v3c0 3-8 3-8 0v-5c0-3 2-3 5-3h4c2 0 3-2 3-5z" fill="#ffd845" />
      </Svg>
    ),
  },
  {
    name: "Nox",
    icon: (
      <Svg w={32} h={34}>
        <path d="M16 1l13 7v18l-13 7-13-7V8z" fill="#282b33" stroke="#15161a" />
        <path d="M6 20v-4c0-3 4-3 4 0v4M22 14l5 6M27 14l-5 6" stroke="#12a5bd" strokeWidth="1.500" />
        <circle cx="16" cy="17" r="3.500" stroke="#12a5bd" strokeWidth="1.500" />
      </Svg>
    ),
  },
  {
    name: "Firefox",
    icon: (
      <Svg w={32}>
        <circle cx="17" cy="16" r="12" fill="#2c4fb8" />
        <path
          d="M5 3l4 5c2-1 4-1 5 0-2 1-1 3 2 4-1 2-4 2-4 5 1 5 9 5 10 0 2-5-2-11-4-16 9 4 13 11 11 18C25 33 3 33 2 17c0-6 1-10 3-14z"
          fill="url(#gFox)"
        />
      </Svg>
    ),
  },
  {
    name: "Paint",
    open: true,
    icon: (
      <Svg w={32}>
        <path d="M2 19C1 9 12 4 20 6c8 1 11 7 9 14-2 6-8 10-13 8-3-1-1-5-4-6s-9 3-10-3z" fill="#bfe0f2" stroke="#5c98bd" />
        <circle cx="8" cy="18" r="3" fill="#e24a35" />
        <circle cx="11" cy="11" r="2.500" fill="#4bb14a" />
        <circle cx="18" cy="10" r="2.500" fill="#f2b233" />
        <circle cx="17" cy="20" r="2.500" fill="#3b78d0" />
        <path d="M27 5l-4 24-3 2v-5l3-22z" fill="#e98b2c" stroke="#9c5414" />
        <path d="M24 1l7 2-4 6-4-2z" fill="#c09a68" />
      </Svg>
    ),
  },
  {
    name: "Garena",
    icon: (
      <Svg w={32}>
        <rect width="32" height="32" rx="2" fill="#0b0b0c" />
        <path d="M4 12c3-6 8-5 12-3 5 1 9 0 12-3-1 5-4 7-8 7-6 0-10-3-16-1z" fill="#e5242b" />
        <path d="M23 15c-8-1-14 1-14 7 1 6 12 7 14-2h-7" stroke="#e5242b" strokeWidth="3" />
      </Svg>
    ),
  },
  {
    name: "Resource Monitor",
    open: true,
    icon: (
      <Svg w={32}>
        <path d="M2 7h8v18H2z" fill="#c9cdd1" stroke="#777" />
        <path d="M7 3h22v18H7z" fill="#f1f1f1" stroke="#9a9a9a" />
        <path d="M9 5h18v14H9z" fill="#e9f5fc" />
        <path d="M9 17l3-3 2 3 2-9 2 9 3-6 2 5 4-1" stroke="#3e93c8" />
        <ellipse cx="18" cy="27" rx="7" ry="3" fill="#e2e2e2" />
        <path d="M15 21h6v5h-6z" fill="#cfcfcf" />
        <circle cx="5" cy="11" r="1" fill="#2eae2e" />
      </Svg>
    ),
  },
  {
    name: "AutoCAD",
    open: true,
    current: true,
    icon: (
      <Svg w={32}>
        <path d="M0 0h32v32H0z" fill="url(#gAcad)" />
        <path d="M15 4h3l8 20-4 2-2-4c-2-2-6-2-8 0l-2 4-4-2z" fill="#a81616" />
        <path d="M15 4l2 10-8 7-3 3z" fill="#c42222" />
        <path d="M17 5l8 19-4 1-5-8z" fill="#8c1010" />
      </Svg>
    ),
  },
];

const Tray = () => (
  <div className="relative isolate flex shrink-0 items-center gap-2">
    <div className="absolute left-[66px] top-0 -z-10 font-['Lato',sans-serif] font-light text-[#b58d96]" aria-hidden="true">
      <p className="whitespace-nowrap text-[17px] leading-[18px]">2013|phOTOgraph</p>
      <p className="pl-10 text-[9px] leading-[11px]">shotmail.v</p>
      <p className="pl-10 text-[9px] leading-[11px]">wordpress.com</p>
    </div>
    <div className="flex items-center">
      <Svg w={18} h={24}>
        <path d="M4 1v5M13 1v5" stroke="#fff" strokeWidth="3" />
        <path d="M0 6h17v8l-5 4v5H5v-5l-5-4z" fill="#fff" />
        <path d="M4 11l4 4 6-7" stroke="#1895b8" strokeWidth="2.500" />
      </Svg>
      <span className="flex h-6 w-[42px] border-2 border-white bg-[#f3cadf]">
        <span className="w-1 border-r border-[#222] bg-[#d6425f]" />
        <span className="flex-1 text-center text-[13px] leading-5 text-white [text-shadow:1px_1px_1px_#555]">10%</span>
      </span>
      <span className="h-[10px] w-1 bg-white" />
    </div>
    <Svg w={16}>
      <path d="M2 6h3l4-4v12l-4-4H2z" fill="#fff" stroke="#222" strokeWidth="0.700" />
      <path d="M11 5c2 2 2 4 0 6M13 3c3 3 3 7 0 10" stroke="#fff" />
    </Svg>
    <Svg w={16}>
      <path d="M5.500 4.500h9v7h-9zM10 12v2M7 14.500h6" stroke="#fff" strokeWidth="1.500" />
      <path d="M1.500 1.500h4v4h-4zM3.500 6v8" stroke="#fff" strokeWidth="1.500" />
    </Svg>
    <Svg w={14} h={16}>
      <path d="M1 2h12v12H1z" fill="#4e4348" stroke="#77696f" strokeDasharray="1 1" />
    </Svg>
    <Svg w={18} h={16}>
      <path d="M2 1h6v4H2zM1 5h8v9H1z" fill="#9ba0a4" stroke="#555" />
      <circle cx="12" cy="11" r="5" fill="#2da335" />
      <path d="M9.500 11l2 2 3-4" stroke="#fff" strokeWidth="1.500" />
    </Svg>
    <Svg w={16}>
      <circle cx="8" cy="8" r="7.500" fill="#8cc152" />
      <circle cx="8" cy="8" r="6" fill="#f09c2c" />
      <ellipse cx="8" cy="8" rx="3" ry="5.500" fill="#fde6a8" />
    </Svg>
    <Svg w={16}>
      <path d="M8.500 3.500h6v11h-6zM10 2h3" stroke="#fff" strokeWidth="1.500" />
      <path d="M2 1v4M5 1v4M3.500 9v6" stroke="#fff" strokeWidth="1.500" />
      <path d="M0 5h7v4H0z" fill="#fff" />
    </Svg>
    <Svg w={16}>
      <path d="M2 2v13" stroke="#fff" strokeWidth="2" />
      <path d="M3 2h6v2h5l-2 3 1 2H9V8H3z" fill="#fff" />
    </Svg>
  </div>
);

const Taskbar = () => (
  <nav className="flex h-[41px] bg-linear-to-r from-[#583338] via-[#663c46] to-[#53303a]">
    <button aria-label="Start menu" className="flex w-[50px] shrink-0 items-center justify-center">
      <Svg w={28} h={28}>
        <path d="M1 5l11-1.500V13H1zM13.500 3.300 27 1.500V13H13.500zM1 14.500h11V24L1 22.500zM13.500 14.500H27V26l-13.500-1.800z" fill="#fff" />
      </Svg>
    </button>
    {taskApps.map((a) => (
      <button key={a.name} aria-label={a.name} className="flex w-[62px] shrink-0 items-center justify-center p-[2px]">
        <span
          className={`flex h-full w-full items-center justify-center border ${
            a.current
              ? "border-white bg-[#b98c94]"
              : a.open
              ? "border-[#a8868d] bg-[#80575f]"
              : "border-transparent"
          }`}
        >
          {a.icon}
        </span>
      </button>
    ))}
    <div className="w-[6px]" />
    <Tray />
    <div className="flex flex-1 flex-col justify-center pr-1 text-center text-[11px] leading-[17px] text-white">
      <time>9:23 PM</time>
      <time>9/10/2018</time>
    </div>
  </nav>
);

export default function App() {
  return (
    <div className="flex min-h-screen flex-col overflow-hidden bg-[#383838] font-['Open_Sans',sans-serif]">
      <Gradients />
      <header className="grid grid-cols-[41px_1fr] bg-[#535353]">
        <AppButton />
        <TitleBar />
        <MenuTabs />
      </header>
      <Ribbon />
      <FileTabs />
      <Canvas />
      <StatusBar />
      <Taskbar />
    </div>
  );
}
